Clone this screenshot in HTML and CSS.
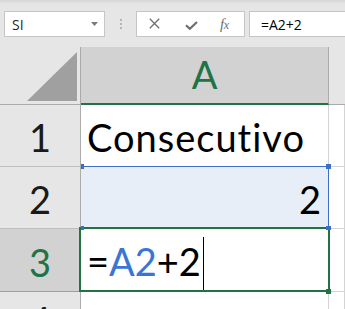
FILE: index.html
```html
<!DOCTYPE html>
<html lang="es">
<head>
<meta charset="utf-8">
<title>Excel</title>
<link rel="stylesheet" href="styles.css">
</head>
<body>
<div class="app">
  <div class="toolbar">
    <div class="namebox">
      <span>SI</span>
      <svg class="dd" width="7" height="4" viewBox="0 0 7 4"><path d="M0 0H7L3.5 4Z" fill="#7a7a7a"/></svg>
    </div>
    <div class="grip"><i></i><i></i><i></i></div>
    <div class="fxbtns">
      <svg class="ic-x" width="11" height="11" viewBox="0 0 11 11"><path d="M0.8 0.8L10.2 10.2M10.2 0.8L0.8 10.2" stroke="#6f6f6f" stroke-width="1.3" fill="none"/></svg>
      <svg class="ic-ok" width="13" height="9" viewBox="0 0 13 9"><path d="M1 4.2L4.8 7.8L12 1" stroke="#6f6f6f" stroke-width="2.2" fill="none"/></svg>
      <span class="fx">f<small>x</small></span>
    </div>
    <div class="formula">=A2+2</div>
  </div>
  <div class="sheet">
    <div class="corner"><div class="tri"></div></div>
    <div class="colhead sel">A</div>
    <div class="colhead"></div>

    <div class="rowhead">1</div>
    <div class="cell txt">Consecutivo</div>
    <div class="cell"></div>

    <div class="rowhead">2</div>
    <div class="cell ref">2
      <span class="h h-tl"></span><span class="h h-tr"></span><span class="h h-bl"></span><span class="h h-br"></span>
    </div>
    <div class="cell"></div>

    <div class="rowhead sel">3</div>
    <div class="cell active">=<span class="refa">A2</span>+2<span class="caret"></span><span class="fill"></span></div>
    <div class="cell"></div>

    <div class="rowhead last">4</div>
    <div class="cell last"></div>
    <div class="cell last"></div>
  </div>
</div>
</body>
</html>
```

FILE: styles.css
```css
* { box-sizing: border-box; }
html, body { margin: 0; padding: 0; }
body { width: 345px; height: 309px; overflow: hidden; background: #e6e6e6; }
.app { width: 345px; height: 309px; display: flex; flex-direction: column; overflow: hidden; }

.toolbar {
  height: 47px;
  flex: none;
  display: flex;
  align-items: flex-start;
  padding: 11px 0 0 4px;
  background: linear-gradient(#d6d6d6 0px, #e2e2e2 3px, #e6e6e6 5px);
  font-family: "Open Sans", "Noto Sans", sans-serif;
  font-size: 14px;
  color: #000;
}
.namebox {
  width: 101px;
  height: 26px;
  background: #fff;
  border: 1px solid #c6c6c6;
  display: flex;
  align-items: center;
  justify-content: space-between;
  padding: 0 6px 0 7px;
}
.namebox span { color: #1f1f1f; }
.grip {
  width: 31px;
  height: 26px;
  display: flex;
  flex-direction: column;
  align-items: center;
  justify-content: center;
  gap: 2px;
}
.grip i { display: block; width: 2px; height: 2px; background: #b4b4b4; }
.fxbtns {
  width: 109px;
  height: 26px;
  background: #fff;
  border: 1px solid #c6c6c6;
  display: flex;
  align-items: center;
  padding-left: 12px;
}
.ic-x { margin-top: -1px; }
.ic-ok { margin-left: 25px; margin-top: 3px; }
.fx {
  margin-left: 22px;
  font-family: "Liberation Serif", serif;
  font-style: italic;
  font-size: 15px;
  color: #6f6f6f;
  letter-spacing: -0.5px;
}
.fx small { font-size: 12px; }
.formula {
  flex: 1;
  margin-left: 4px;
  height: 26px;
  background: #fff;
  border: 1px solid #c6c6c6;
  border-right: none;
  display: flex;
  align-items: center;
  padding-left: 11px;
}

.sheet {
  flex: none;
  height: 307px;
  display: grid;
  grid-template-columns: 81px 248px 1fr;
  grid-template-rows: 58px 62px 62px 63px 62px;
  background: #fff;
  font-family: Lato, "Open Sans", sans-serif;
  font-size: 38px;
  line-height: 1;
}
.sheet > div {
  display: flex;
  align-items: flex-end;
  padding-bottom: 10px;
}
.sheet > .last { padding-bottom: 14px; }
.corner {
  background: #e6e6e6;
  border-right: 1px solid #ababab;
  border-bottom: 1px solid #ababab;
  justify-content: flex-end;
  padding: 0 3px 3px 0 !important;
}
.tri {
  width: 50px;
  height: 49px;
  background: #a0a0a0;
  clip-path: polygon(100% 0, 100% 100%, 0 100%);
}
.colhead {
  background: #e6e6e6;
  border-bottom: 1px solid #ababab;
  justify-content: center;
  color: #262626;
}
.colhead.sel {
  background: #d2d2d2;
  color: #217346;
  border-right: 1px solid #ababab;
  border-bottom: 2px solid #217346;
}
.rowhead {
  background: #e6e6e6;
  border-right: 1px solid #ababab;
  border-bottom: 1px solid #bfbfbf;
  justify-content: center;
  color: #1a1a1a;
}
.rowhead.sel {
  background: #d2d2d2;
  color: #217346;
  border-bottom-color: #9e9e9e;
}
.cell {
  background: #fff;
  border-right: 1px solid #d4d4d4;
  border-bottom: 1px solid #d4d4d4;
  padding-left: 6px;
  padding-right: 7px;
  color: #000;
  position: relative;
}
.cell.txt { letter-spacing: 1px; }
.cell.ref {
  background: #e8eef8;
  justify-content: flex-end;
}
.cell.ref::before {
  content: "";
  position: absolute;
  top: -1px;
  left: 0;
  right: -1px;
  bottom: 0;
  border: 1px solid #3b6fc7;
  border-left: none;
  border-bottom: none;
}
.h { position: absolute; background: #3b6fc7; z-index: 3; }
.h-tl { left: 0; top: -3px; width: 3px; height: 5px; }
.h-tr { right: -3px; top: -3px; width: 5px; height: 5px; }
.h-bl { left: 0; bottom: -2px; width: 3px; height: 4px; }
.h-br { right: -3px; bottom: -2px; width: 5px; height: 4px; }

.sheet > .cell.active { padding-bottom: 11px; }
.cell.active::after {
  content: "";
  position: absolute;
  top: -2px;
  left: -2px;
  right: -2px;
  bottom: -1px;
  border: 2px solid #217346;
  z-index: 2;
}
.refa { color: #3a75d4; }
.caret {
  display: inline-block;
  width: 1px;
  height: 55px;
  margin-left: 2px;
  margin-bottom: -12px;
  background: #000;
}
.fill {
  position: absolute;
  right: -3px;
  bottom: -3px;
  width: 5px;
  height: 5px;
  background: #217346;
  z-index: 3;
}
```
